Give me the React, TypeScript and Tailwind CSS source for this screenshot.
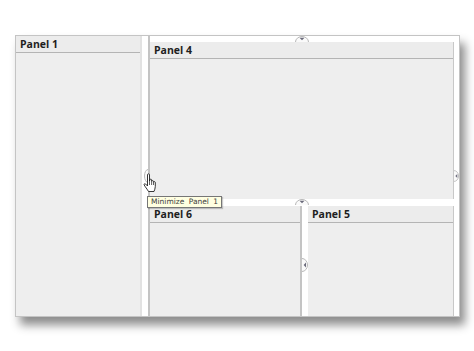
import React from 'react';

const font = { fontFamily: '"Open Sans", "Liberation Sans", sans-serif' };

function PanelHeader({ title }: { title: string }) {
  return (
    <div className="h-[17px] shrink-0 border-b border-[#b4b4b4] bg-[#ececec] pl-[4px] text-[10.5px] font-bold leading-[16px] text-[#1e1e1e]">
      {title}
    </div>
  );
}

function Panel({ title, className = '' }: { title: string; className?: string }) {
  return (
    <div className={`flex flex-col bg-[#eeeeee] ${className}`}>
      <PanelHeader title={title} />
      <div className="flex-1" />
    </div>
  );
}

// small semicircular splitter handle with a triangle
function HandleDown() {
  return (
    <svg width="14" height="6" viewBox="0 0 14 6" className="block">
      <path d="M0.5 6 A6.5 5.5 0 0 1 13.5 6" fill="#fafafa" stroke="#b8b8b8" strokeWidth="1" />
      <path d="M4.5 1.8 L9.5 1.8 L7 4.2 Z" fill="#6a6a7a" />
    </svg>
  );
}

function HandleLeft() {
  return (
    <svg width="6" height="14" viewBox="0 0 6 14" className="block">
      <path d="M0 0.5 A5.5 6.5 0 0 1 0 13.5" fill="#fafafa" stroke="#b8b8b8" strokeWidth="1" />
      <path d="M1.6 7 L4 4.5 L4 9.5 Z" fill="#6a6a7a" />
    </svg>
  );
}

function HandCursor() {
  return (
    <svg width="16" height="20" viewBox="0 0 16 20" className="block">
      <path
        d="M4.5 1.5 C4.5 0.7 6.5 0.7 6.5 1.5 L6.5 8 L6.8 6.8 C6.8 6 8.6 6 8.6 6.8 L8.6 8.3 C8.6 7.5 10.5 7.5 10.5 8.3 L10.5 9.3 C10.5 8.5 12.3 8.5 12.3 9.3 L12.3 13.5 C12.3 15.5 11.5 17 11 18.5 L5.5 18.5 C4.8 17 3.5 15.5 2.3 13.8 L1.2 12 C0.7 11 1.8 10.2 2.6 11 L4.5 13 Z"
        fill="#ffffff"
        stroke="#202020"
        strokeWidth="0.9"
        strokeLinejoin="round"
      />
      <path d="M6.5 8 L6.5 12 M8.6 8.3 L8.6 12 M10.5 9.3 L10.5 12" stroke="#202020" strokeWidth="0.7" />
    </svg>
  );
}

export default function App() {
  return (
    <div className="h-[351px] w-[474px] overflow-hidden bg-white pl-[15px] pt-[35px]" style={font}>
      <div className="relative flex h-[282px] w-[445px] border border-[#c4c4c4] bg-white shadow-[5px_8px_9px_rgba(0,0,0,0.45)]">
        {/* Panel 1 */}
        <Panel title="Panel 1" className="w-[126px] border-r-2 border-[#e2e2e2]" />

        {/* vertical splitter */}
        <div className="relative w-[6px] shrink-0 bg-white">
          <div className="absolute right-0 top-[133px]">
            <svg width="4" height="14" viewBox="0 0 4 14" className="block">
              <path d="M4 0.5 A3.5 6.5 0 0 0 4 13.5" fill="#fafafa" stroke="#b8b8b8" strokeWidth="1" />
            </svg>
          </div>
        </div>

        {/* right region */}
        <div className="flex flex-1 border-l-2 border-[#c4c4c4]">
          <div className="flex flex-1 flex-col">
            <div className="flex h-[6px] shrink-0 justify-center bg-white">
              <HandleDown />
            </div>
            <Panel title="Panel 4" className="flex-1 border-r border-[#c8c8c8]" />
            <div className="flex h-[7px] shrink-0 justify-center bg-white">
              <HandleDown />
            </div>
            <div className="flex h-[110px] shrink-0">
              <Panel title="Panel 6" className="w-[150px]" />
              <div className="flex w-[8px] shrink-0 items-center border-l-2 border-[#c4c4c4] bg-white pt-[8px]">
                <HandleLeft />
              </div>
              <Panel title="Panel 5" className="flex-1 border-r border-[#c8c8c8]" />
            </div>
          </div>
          <div className="flex w-[5px] shrink-0 items-start bg-white pt-[133px]">
            <HandleLeft />
          </div>
        </div>

        {/* cursor + tooltip */}
        <div className="absolute left-[127px] top-[137px]">
          <HandCursor />
        </div>
        <div
          className="absolute left-[131px] top-[160px] h-[12px] whitespace-nowrap border border-[#767676] bg-[#ffffe1] px-[3px] text-[7.5px] leading-[10px] text-[#404040] shadow-[1px_1px_1px_rgba(0,0,0,0.2)] [word-spacing:2px]"
          style={{ fontFamily: '"DejaVu Sans", sans-serif' }}
        >
          Minimize Panel 1
        </div>
      </div>
    </div>
  );
}
